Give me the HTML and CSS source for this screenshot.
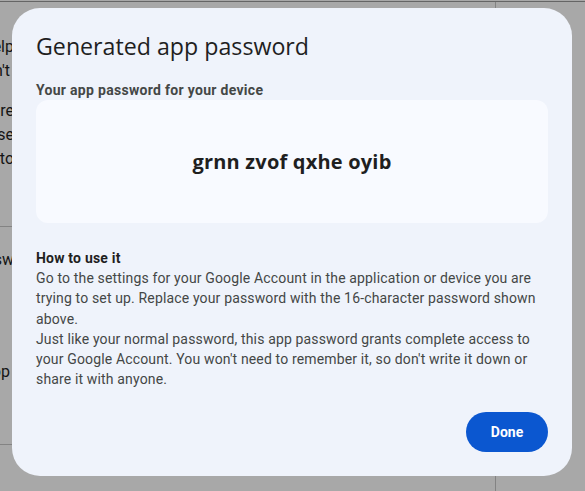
FILE: index.html
```html
<!DOCTYPE html>
<html>
<head>
<meta charset="utf-8">
<link rel="stylesheet" href="styles.css">
</head>
<body>
<div class="page">
  <div class="topbar"></div>
  <div class="content">
    <div class="col">
      <p class="bg-line l1"><span>Get help</span></p>
      <p class="bg-line l2"><span>Don't&nbsp;</span></p>
      <p class="bg-line l3"><span>more</span></p>
      <p class="bg-line l4"><span>use</span></p>
      <p class="bg-line l5"><span>to</span></p>
      <div class="bg-rule r1"></div>
      <p class="bg-line l6"><span>Passw</span></p>
      <p class="bg-line l7"><span>app&nbsp;</span></p>
      <div class="bg-rule r2"></div>
    </div>
    <div class="vrule"></div>
  </div>
</div>
<div class="scrim">
  <div class="dialog" role="dialog">
    <h1 class="title">Generated app password</h1>
    <h2 class="label">Your app password for your device</h2>
    <div class="pwbox"><span class="pw">grnn zvof qxhe oyib</span></div>
    <h3 class="howto">How to use it</h3>
    <p class="body">Go to the settings for your Google Account in the application or device you are trying to set up. Replace your password with the 16-character password shown above.<br>Just like your normal password, this app password grants complete access to your Google Account. You won't need to remember it, so don't write it down or share it with anyone.</p>
    <div class="actions"><button class="done">Done</button></div>
  </div>
</div>
</body>
</html>
```
FILE: styles.css
```css
html, body {
  margin: 0;
  padding: 0;
  width: 585px;
  height: 491px;
  overflow: hidden;
  background: #ffffff;
  font-family: Roboto, "Open Sans", Arial, sans-serif;
}
.page {
  width: 585px;
  height: 491px;
  color: #1f1f1f;
}
.topbar {
  height: 1px;
  border-bottom: 1px solid #9a9a9a;
}
.content {
  display: flex;
  height: 489px;
}
.col {
  width: 495px;
  font-size: 16px;
}
.bg-line {
  margin: 0;
  width: 14px;
  line-height: 24px;
  white-space: nowrap;
  direction: rtl;
  text-align: right;
}
.bg-line span {
  direction: ltr;
  unicode-bidi: isolate;
}
.l1 { margin-top: 33px; }
.l3 { margin-top: 16px; }
.bg-rule { height: 1px; background: #c7c7c7; }
.r1 { margin-top: 55px; }
.l6 { margin-top: 21px; }
.l7 { margin-top: 88px; }
.r2 { margin-top: 60px; }
.vrule { width: 1px; background: #c7c7c7; }

.scrim {
  position: fixed;
  inset: 0;
  background: rgba(0, 0, 0, 0.34);
}
.dialog {
  position: absolute;
  left: 12px;
  top: 8px;
  width: 560px;
  height: 468px;
  box-sizing: border-box;
  padding: 22px 24px 24px 24px;
  background: #eff3fb;
  border-radius: 28px;
  display: flex;
  flex-direction: column;
}
.title {
  margin: 0;
  font-family: "Open Sans", Roboto, sans-serif;
  font-size: 23.2px;
  line-height: 32px;
  font-weight: 400;
  color: #1f1f1f;
}
.label {
  margin: 18px 0 0 0;
  font-size: 14px;
  line-height: 20px;
  font-weight: 700;
  letter-spacing: 0.3px;
  color: #444746;
}
.pwbox {
  margin-top: 0;
  height: 123px;
  background: #f8faff;
  border-radius: 12px;
  display: flex;
  align-items: center;
  justify-content: center;
}
.pw {
  font-family: "Open Sans", Roboto, sans-serif;
  font-size: 20px;
  letter-spacing: 0.2px;
  font-weight: 700;
  color: #1f1f1f;
}
.howto {
  margin: 25px 0 0 0;
  font-size: 14px;
  line-height: 20px;
  font-weight: 700;
  letter-spacing: 0.2px;
  color: #1f1f1f;
}
.body {
  margin: 0;
  font-size: 14px;
  line-height: 20.3px;
  letter-spacing: 0.15px;
  color: #444746;
}
.actions {
  display: flex;
  justify-content: flex-end;
  margin-top: auto;
}
.done {
  width: 82px;
  height: 40px;
  border: none;
  border-radius: 20px;
  background: #0b57d0;
  color: #ffffff;
  font-family: inherit;
  font-size: 14px;
  font-weight: 700;
}
```
